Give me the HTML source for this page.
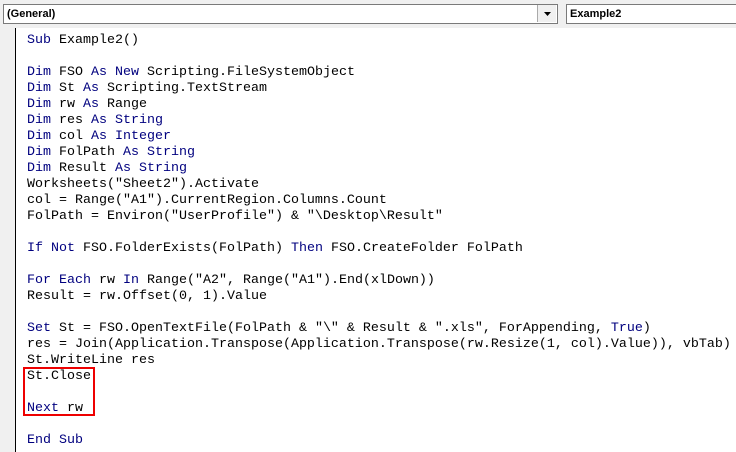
<!DOCTYPE html>
<html><head><style>
body{margin:0;width:736px;height:452px;overflow:hidden;background:#fff;position:relative;font-family:"Liberation Mono",monospace}
.top{position:absolute;left:0;top:0;width:736px;height:28px;background:#f0f0f0}
.cb{position:absolute;top:4px;height:18px;background:#fff;border:1px solid #7a7a7a;font:bold 11px "Liberation Sans",sans-serif;line-height:18px;padding-left:3px;box-sizing:content-box}
.btn{position:absolute;left:537px;top:5px;width:18px;height:17px;background:#f0f0f0;border-left:1px solid #aaa}
.gut{position:absolute;left:0;top:28px;width:15px;height:424px;background:#f0f0f0;border-right:1px solid #000}
pre{position:absolute;left:27px;top:33px;margin:0;font:13.33px/16px "Liberation Mono",monospace;color:#000}
b{font-weight:normal;color:#00007f}
.box{position:absolute;left:23px;top:367px;width:68px;height:45px;border:2px solid #e00}
</style></head><body>
<div class="top"></div>
<div class="cb" style="left:3px;width:550px">(General)</div>
<div class="btn"><svg width="18" height="17"><path d="M6 7h7l-3.5 4z" fill="#000"/></svg></div>
<div class="cb" style="left:566px;width:170px;border-right:none">Example2</div>
<div class="gut"></div>
<pre><b>Sub</b> Example2()

<b>Dim</b> FSO <b>As New</b> Scripting.FileSystemObject
<b>Dim</b> St <b>As</b> Scripting.TextStream
<b>Dim</b> rw <b>As</b> Range
<b>Dim</b> res <b>As String</b>
<b>Dim</b> col <b>As Integer</b>
<b>Dim</b> FolPath <b>As String</b>
<b>Dim</b> Result <b>As String</b>
Worksheets("Sheet2").Activate
col = Range("A1").CurrentRegion.Columns.Count
FolPath = Environ("UserProfile") &amp; "\Desktop\Result"

<b>If Not</b> FSO.FolderExists(FolPath) <b>Then</b> FSO.CreateFolder FolPath

<b>For Each</b> rw <b>In</b> Range("A2", Range("A1").End(xlDown))
Result = rw.Offset(0, 1).Value

<b>Set</b> St = FSO.OpenTextFile(FolPath &amp; "\" &amp; Result &amp; ".xls", ForAppending, <b>True</b>)
res = Join(Application.Transpose(Application.Transpose(rw.Resize(1, col).Value)), vbTab)
St.WriteLine res
St.Close

<b>Next</b> rw

<b>End Sub</b></pre>
<div class="box"></div>
</body></html>
